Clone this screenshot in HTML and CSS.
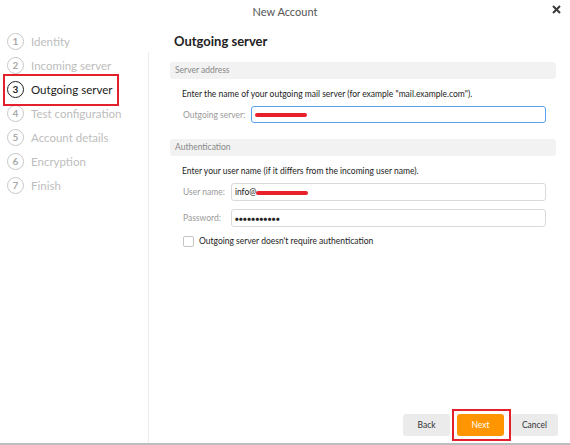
FILE: index.html
```html
<!DOCTYPE html>
<html lang="en">
<head>
  <meta charset="UTF-8">
  <title>New Account</title>
  <link rel="stylesheet" href="styles.css">
</head>
<body>
  <div class="window">
    <div class="titlebar">
      <span class="title">New Account</span>
      <svg class="close" width="9" height="9" viewBox="0 0 9 9"><path d="M1 1 L8 8 M8 1 L1 8" stroke="#3a3a3a" stroke-width="2"/></svg>
    </div>

    <div class="main">
      <ul class="steps">
        <li class="step"><span class="step-num">1</span>Identity</li>
        <li class="step"><span class="step-num">2</span>Incoming server</li>
        <li class="step step-active"><span class="step-num">3</span>Outgoing server</li>
        <li class="step"><span class="step-num">4</span>Test configuration</li>
        <li class="step"><span class="step-num">5</span>Account details</li>
        <li class="step"><span class="step-num">6</span>Encryption</li>
        <li class="step"><span class="step-num">7</span>Finish</li>
      </ul>

      <div class="content">
        <h1>Outgoing server</h1>

        <div class="pane">
          <div class="section">
            <div class="section-bar">Server address</div>
            <p class="section-intro">Enter the name of your outgoing mail server (for example "mail.example.com").</p>
            <div class="fields">
              <label>Outgoing server:</label>
              <div class="input input-focus"><span class="redact"></span></div>
            </div>
          </div>

          <div class="section">
            <div class="section-bar">Authentication</div>
            <p class="section-intro">Enter your user name (if it differs from the incoming user name).</p>
            <div class="fields">
              <label>User name:</label>
              <div class="input">info@<span class="redact"></span></div>
              <label>Password:</label>
              <div class="input input-password">&#9679;&#9679;&#9679;&#9679;&#9679;&#9679;&#9679;&#9679;&#9679;&#9679;&#9679;</div>
            </div>
            <div class="check-row">
              <span class="checkbox"></span>
              Outgoing server doesn't require authentication
            </div>
          </div>

          <div class="buttons">
            <button class="button">Back</button>
            <button class="button button-primary">Next</button>
            <button class="button">Cancel</button>
          </div>
        </div>
      </div>
    </div>
  </div>
</body>
</html>
```

FILE: styles.css
```css
body {
  margin: 0;
  font-family: Lato, 'Open Sans', sans-serif;
  background-color: #fff;
  color: #222;
}

.window {
  width: 570px;
  height: 443px;
  display: flex;
  flex-direction: column;
  border-bottom: 2px solid #bdbdbd;
}

.titlebar {
  height: 22px;
  display: flex;
  align-items: center;
  justify-content: center;
  position: relative;
}

.title {
  font-size: 11px;
  color: #555;
}

.close {
  position: absolute;
  right: 9px;
  top: 5px;
}

.main {
  flex: 1;
  display: flex;
}

.steps {
  list-style: none;
  margin: 0;
  padding: 7px 0 0 7px;
  width: 141px;
}

.step {
  display: flex;
  align-items: center;
  height: 24px;
  font-size: 11.5px;
  color: #bdbdbd;
}

.step-num {
  width: 15px;
  height: 15px;
  border: 1.5px solid #c8c8c8;
  border-radius: 50%;
  display: flex;
  align-items: center;
  justify-content: center;
  font-size: 10px;
  font-weight: 700;
  color: #aaa;
  margin-right: 7px;
}

.step-active {
  color: #222;
  width: fit-content;
  padding-right: 5px;
  position: relative;
}

.step-active::after {
  content: '';
  position: absolute;
  inset: -3px -2px -5px -4px;
  border: 2px solid #e3202c;
}

.step-active .step-num {
  border-color: #222;
  color: #222;
}

.content {
  flex: 1;
  display: flex;
  flex-direction: column;
}

.content h1 {
  margin: 9px 0 0 26px;
  font-size: 13px;
  font-weight: 700;
  line-height: 20px;
  color: #222;
}

.pane {
  flex: 1;
  display: flex;
  flex-direction: column;
  border-left: 1px solid #ececec;
  margin-top: 1px;
  padding: 10px 14px 7px 21px;
}

.section {
  margin-bottom: 16px;
}

.section-bar {
  height: 17px;
  line-height: 17px;
  padding-left: 5px;
  background-color: #f2f2f2;
  border-radius: 3px;
  font-size: 8.5px;
  color: #888;
}

.section-intro {
  margin: 8px 0 5px 12px;
  font-size: 8.5px;
  line-height: 14px;
}

.fields {
  display: grid;
  grid-template-columns: auto 1fr;
  column-gap: 6px;
  row-gap: 8px;
  align-items: center;
  margin: 0 10px 0 13px;
}

.fields label {
  font-size: 8.5px;
  color: #999;
}

.input {
  height: 16px;
  border: 1px solid #dadada;
  border-radius: 3px;
  display: flex;
  align-items: center;
  padding-left: 3px;
  font-size: 8.5px;
  color: #222;
}

.input-focus {
  border: 1.5px solid #5aa2ef;
  height: 15px;
}

.input-password {
  font-size: 6.5px;
  letter-spacing: 0.2px;
}

.redact {
  display: inline-block;
  width: 52px;
  height: 4px;
  border-radius: 2px;
  background-color: #e8202a;
  margin-top: 1px;
}

.check-row {
  display: flex;
  align-items: center;
  margin: 7px 0 0 13px;
  font-size: 8.5px;
  line-height: 14px;
}

.checkbox {
  width: 9px;
  height: 9px;
  border: 1px solid #c4c4c4;
  border-radius: 2px;
  margin-right: 5px;
}

.buttons {
  margin-top: auto;
  display: flex;
  justify-content: flex-end;
  gap: 7px;
  margin-right: -2px;
}

.button {
  width: 47px;
  height: 22px;
  border: none;
  border-radius: 3px;
  background-color: #ebebeb;
  font-family: inherit;
  font-size: 8.5px;
  color: #333;
  padding: 0;
}

.button-primary {
  background-color: #ff9500;
  color: #fff;
  position: relative;
}

.button-primary::after {
  content: '';
  position: absolute;
  inset: -5px -7px -5px -5px;
  border: 2px solid #e3202c;
}
```
